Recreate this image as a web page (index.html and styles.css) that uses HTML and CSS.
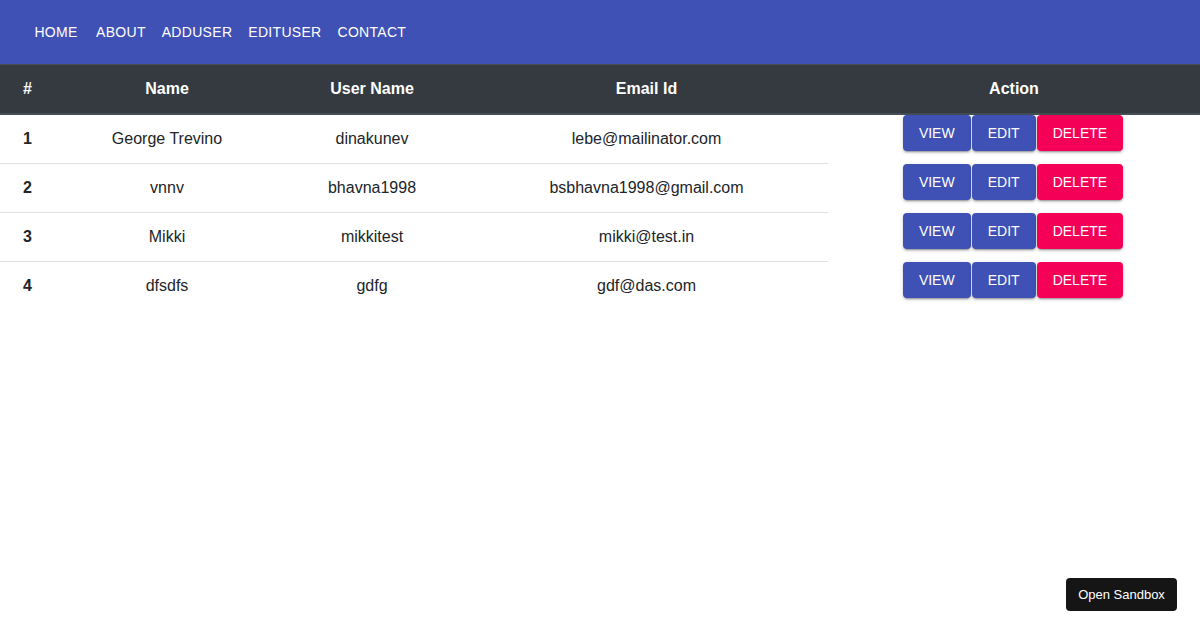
FILE: index.html
```html
<!DOCTYPE html>
<html lang="en">

<head>
    <meta charset="UTF-8">
    <meta name="viewport" content="width=device-width, initial-scale=1.0">
    <title>Users</title>
    <link rel="stylesheet" href="styles.css">
</head>

<body>
    <div class="appbar">
        <a class="nav-btn">Home</a>
        <a class="nav-btn">About</a>
        <a class="nav-btn">AddUser</a>
        <a class="nav-btn">EditUser</a>
        <a class="nav-btn">Contact</a>
    </div>

    <table class="users">
        <colgroup>
            <col style="width: 55px">
            <col style="width: 224px">
            <col style="width: 186px">
            <col style="width: 363px">
            <col>
        </colgroup>
        <thead>
            <tr>
                <th>#</th>
                <th>Name</th>
                <th>User Name</th>
                <th>Email Id</th>
                <th>Action</th>
            </tr>
        </thead>
        <tbody>
            <tr>
                <th>1</th>
                <td>George Trevino</td>
                <td>dinakunev</td>
                <td>lebe@mailinator.com</td>
                <td class="action">
                    <div class="btns">
                        <span class="btn">View</span>
                        <span class="btn">Edit</span>
                        <span class="btn btn-del">Delete</span>
                    </div>
                </td>
            </tr>
            <tr>
                <th>2</th>
                <td>vnnv</td>
                <td>bhavna1998</td>
                <td>bsbhavna1998@gmail.com</td>
                <td class="action">
                    <div class="btns">
                        <span class="btn">View</span>
                        <span class="btn">Edit</span>
                        <span class="btn btn-del">Delete</span>
                    </div>
                </td>
            </tr>
            <tr>
                <th>3</th>
                <td>Mikki</td>
                <td>mikkitest</td>
                <td>mikki@test.in</td>
                <td class="action">
                    <div class="btns">
                        <span class="btn">View</span>
                        <span class="btn">Edit</span>
                        <span class="btn btn-del">Delete</span>
                    </div>
                </td>
            </tr>
            <tr>
                <th>4</th>
                <td>dfsdfs</td>
                <td>gdfg</td>
                <td>gdf@das.com</td>
                <td class="action">
                    <div class="btns">
                        <span class="btn">View</span>
                        <span class="btn">Edit</span>
                        <span class="btn btn-del">Delete</span>
                    </div>
                </td>
            </tr>
        </tbody>
    </table>

    <span class="sandbox">Open Sandbox</span>
</body>

</html>
```

FILE: styles.css
```css
* {
    margin: 0;
    padding: 0;
    box-sizing: border-box;
}

body {
    font-family: "Liberation Sans", Arial, sans-serif;
    font-size: 16px;
    line-height: 24px;
    color: #212529;
    background: #fff;
}

.appbar {
    height: 64px;
    background-color: #3f51b5;
    display: flex;
    align-items: center;
    padding: 0 24px;
}

.nav-btn {
    min-width: 64px;
    padding: 6px 8px;
    color: #fff;
    font-size: 14px;
    line-height: 24px;
    letter-spacing: 0.3px;
    text-transform: uppercase;
    text-align: center;
    cursor: pointer;
}

.users {
    width: 100%;
    border-collapse: collapse;
    table-layout: fixed;
}

.users th,
.users td {
    padding: 12px;
    text-align: center;
    vertical-align: top;
    border-top: 1px solid #dee2e6;
}

.users thead th {
    background-color: #343a40;
    color: #fff;
    border-top: 1px solid #454d55;
    border-bottom: 2px solid #454d55;
}

.users tbody th {
    font-weight: bold;
}

.users tbody tr:first-child th,
.users tbody tr:first-child td {
    border-top: none;
}

.users td.action {
    padding: 0;
    border-top: none;
}

.btns {
    display: flex;
    justify-content: center;
    gap: 1px;
    padding-right: 2px;
}

.btn {
    display: inline-block;
    min-width: 64px;
    height: 36px;
    padding: 6px 16px;
    border-radius: 4px;
    background-color: #3f51b5;
    color: #fff;
    font-size: 14px;
    line-height: 24px;
    text-align: center;
    text-transform: uppercase;
    box-shadow: 0 3px 1px -2px rgba(0, 0, 0, .2), 0 2px 2px 0 rgba(0, 0, 0, .14), 0 1px 5px 0 rgba(0, 0, 0, .12);
    cursor: pointer;
}

.btn-del {
    background-color: #f50057;
}

.sandbox {
    position: fixed;
    right: 23px;
    bottom: 19px;
    width: 111px;
    height: 33px;
    background-color: #151515;
    color: #fff;
    font-size: 13px;
    line-height: 33px;
    text-align: center;
    border-radius: 4px;
}
```
